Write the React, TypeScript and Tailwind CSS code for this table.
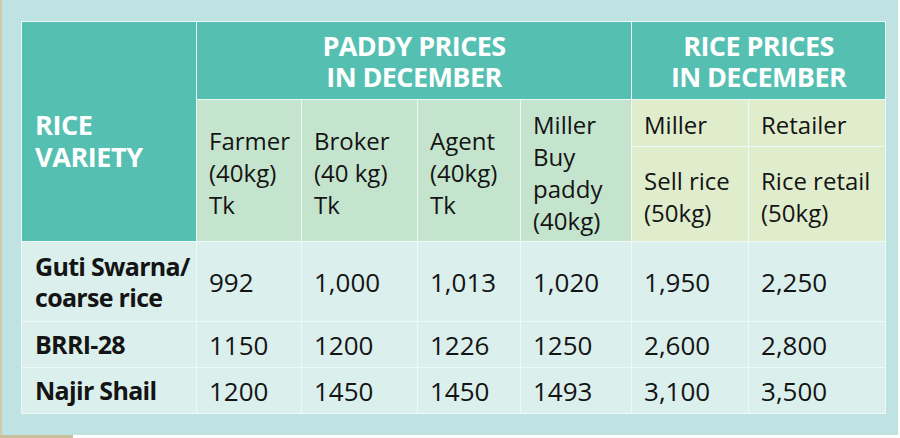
const rows = [
  { name: ['Guti Swarna/', 'coarse rice'], values: ['992', '1,000', '1,013', '1,020', '1,950', '2,250'], h: 'h-[80px]' },
  { name: ['BRRI-28'], values: ['1150', '1200', '1226', '1250', '2,600', '2,800'], h: 'h-[46px]' },
  { name: ['Najir Shail'], values: ['1200', '1450', '1450', '1493', '3,100', '3,500'], h: 'h-[46px]' }
];

const cell = 'border border-[#eef8f6] px-[12px] align-middle';
const head = `${cell} bg-[#55bfb1] text-center text-[27px] leading-[31px] font-bold tracking-[-0.6px] text-white`;
const sub = `${cell} bg-[#c5e4cd] pt-[4px] text-left font-normal`;
const rice = `${cell} bg-[#e0edcc] text-left font-normal`;

export default function App() {
  return (
    <div className="h-[438px] w-[900px] bg-white">
      <div className="flex h-[435px] w-[898px]">
        <div className="w-[2px] bg-[#cfc9ae]" />
        <div
          className="flex-1 bg-[#bfe3e3] pl-[19px] pt-[21px]"
          style={{ fontFamily: '"Open Sans", "Liberation Sans", sans-serif' }}
        >
          <table className="w-[864px] table-fixed border-collapse text-[24px] leading-[32px] text-[#141414]">
            <colgroup>
              <col className="w-[175px]" />
              <col className="w-[105px]" />
              <col className="w-[116px]" />
              <col className="w-[103px]" />
              <col className="w-[111px]" />
              <col className="w-[117px]" />
              <col className="w-[137px]" />
            </colgroup>
            <thead>
              <tr className="h-[78px]">
                <th
                  rowSpan={3}
                  className={`${cell} bg-[#55bfb1] pt-[18px] pl-[13px] text-left text-[27px] leading-[32px] font-bold tracking-[-0.4px] text-white`}
                >
                  RICE
                  <br />
                  VARIETY
                </th>
                <th colSpan={4} className={head}>
                  PADDY PRICES
                  <br />
                  IN DECEMBER
                </th>
                <th colSpan={2} className={head}>
                  RICE PRICES
                  <br />
                  IN DECEMBER
                </th>
              </tr>
              <tr className="h-[47px]">
                <th rowSpan={2} className={sub}>
                  Farmer
                  <br />
                  (40kg)
                  <br />
                  Tk
                </th>
                <th rowSpan={2} className={sub}>
                  Broker
                  <br />
                  (40 kg)
                  <br />
                  Tk
                </th>
                <th rowSpan={2} className={sub}>
                  Agent
                  <br />
                  (40kg)
                  <br />
                  Tk
                </th>
                <th rowSpan={2} className={`${sub} whitespace-nowrap`}>
                  Miller
                  <br />
                  Buy
                  <br />
                  paddy
                  <br />
                  (40kg)
                </th>
                <th className={`${rice} pt-[3px]`}>Miller</th>
                <th className={`${rice} pt-[3px]`}>Retailer</th>
              </tr>
              <tr className="h-[95px]">
                <th className={`${rice} pt-[5px] whitespace-nowrap`}>
                  Sell rice
                  <br />
                  (50kg)
                </th>
                <th className={`${rice} pt-[5px] whitespace-nowrap`}>
                  Rice retail
                  <br />
                  (50kg)
                </th>
              </tr>
            </thead>
            <tbody>
              {rows.map(row => (
                <tr key={row.name[0]} className={row.h}>
                  <td
                    className={`${cell} bg-[#dbefec] pl-[13px] pr-0 text-[25px] font-bold leading-[31px] tracking-[-0.7px] whitespace-nowrap`}
                  >
                    {row.name.map((line, i) => (
                      <div key={i}>{line}</div>
                    ))}
                  </td>
                  {row.values.map((v, i) => (
                    <td key={i} className={`${cell} bg-[#dbefec] text-[26px]`}>
                      {v}
                    </td>
                  ))}
                </tr>
              ))}
            </tbody>
          </table>
        </div>
      </div>
      <div className="h-[3px] w-[73px] bg-[#c8bf9f]" />
    </div>
  );
}
